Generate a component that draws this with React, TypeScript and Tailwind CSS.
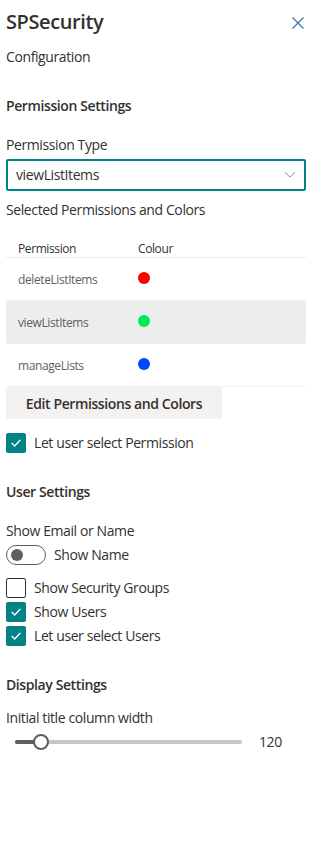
import React from "react";

const Check = () => (
  <svg width="12" height="12" viewBox="0 0 12 12" fill="none">
    <path d="M2 6.3 L4.7 9 L10 3.2" stroke="white" strokeWidth="1.3" strokeLinecap="round" strokeLinejoin="round" />
  </svg>
);

function Checkbox({ checked, label }: { checked: boolean; label: string }) {
  return (
    <div className="flex items-center h-[20px]">
      {checked ? (
        <div className="w-[20px] h-[20px] rounded-[2px] bg-[#038387] flex items-center justify-center">
          <Check />
        </div>
      ) : (
        <div className="w-[20px] h-[20px] rounded-[2px] border border-[#323130] bg-white" />
      )}
      <span className="ml-[8px] text-[14px] leading-[20px] text-[#323130]">{label}</span>
    </div>
  );
}

const rows = [
  { name: "deleteListItems", color: "#ff0000", bg: "bg-white" },
  { name: "viewListItems", color: "#00e85c", bg: "bg-[#ededed]" },
  { name: "manageLists", color: "#0048ff", bg: "bg-white" },
];

export default function App() {
  return (
    <div
      className="w-[318px] h-[841px] bg-white pl-[6px] pr-[12px] text-[#323130] tracking-[-0.4px]"
      style={{ fontFamily: '"Segoe UI", "Open Sans", sans-serif' }}
    >
      <div className="flex items-start justify-between pt-[8px]">
        <h1 className="text-[20px] leading-[28px] font-semibold text-[#323130]">SPSecurity</h1>
        <svg width="12" height="12" viewBox="0 0 12 12" className="mt-[9px] mr-[2px]">
          <path d="M0.5 0.5 L11.5 11.5 M11.5 0.5 L0.5 11.5" stroke="#3b6ea8" strokeWidth="1.1" />
        </svg>
      </div>
      <div className="mt-[11px] text-[14px] leading-[20px]">Configuration</div>

      <div className="mt-[29px] text-[14px] leading-[20px] font-semibold">Permission Settings</div>

      <div className="mt-[19px] text-[14px] leading-[20px]">Permission Type</div>
      <div className="mt-[4px] h-[32px] border-2 border-[#038387] rounded-[2px] flex items-center justify-between pl-[8px] pr-[8px]">
        <span className="text-[14px] leading-[20px]">viewListItems</span>
        <svg width="12" height="8" viewBox="0 0 12 8">
          <path d="M1 1.2 L6 6.2 L11 1.2" stroke="#8a8886" strokeWidth="1" fill="none" />
        </svg>
      </div>
      <div className="mt-[9px] text-[14px] leading-[20px]">Selected Permissions and Colors</div>

      <div className="mt-[20px]">
        <div className="flex h-[18px] items-end border-b border-[#edebe9] text-[12px] leading-[16px] text-[#323130]">
          <div className="w-[132px] pl-[12px]">Permission</div>
          <div>Colour</div>
        </div>
        {rows.map((r) => (
          <div key={r.name} className={`flex items-center h-[43px] border-b border-[#f3f2f1] ${r.bg}`}>
            <div className="w-[132px] pl-[12px] text-[12px] leading-[16px] text-[#605e5c] mt-[2px]">{r.name}</div>
            <div className="w-[12px] h-[12px] rounded-full mb-[2px]" style={{ backgroundColor: r.color }} />
          </div>
        ))}
      </div>
      <button className="h-[32px] w-[216px] bg-[#f3f2f1] text-[14px] font-semibold text-[#323130] rounded-[2px]">
        Edit Permissions and Colors
      </button>
      <div className="mt-[14px]">
        <Checkbox checked label="Let user select Permission" />
      </div>

      <div className="mt-[29px] text-[14px] leading-[20px] font-semibold">User Settings</div>

      <div className="mt-[19px] text-[14px] leading-[20px]">Show Email or Name</div>
      <div className="mt-[4px] flex items-center h-[20px]">
        <div className="w-[40px] h-[20px] rounded-full border border-[#605e5c] flex items-center pl-[4px]">
          <div className="w-[12px] h-[12px] rounded-full bg-[#605e5c]" />
        </div>
        <span className="ml-[8px] text-[14px] leading-[20px]">Show Name</span>
      </div>
      <div className="mt-[13px] flex flex-col gap-[4px]">
        <Checkbox checked={false} label="Show Security Groups" />
        <Checkbox checked label="Show Users" />
        <Checkbox checked label="Let user select Users" />
      </div>

      <div className="mt-[29px] text-[14px] leading-[20px] font-semibold">Display Settings</div>
      <div className="mt-[13px] text-[14px] leading-[20px]">Initial title column width</div>
      <div className="flex items-center h-[28px]">
        <div className="relative ml-[9px] w-[227px] h-[4px] rounded-full bg-[#c8c6c4]">
          <div className="absolute left-0 top-0 h-[4px] w-[26px] rounded-full bg-[#605e5c]" />
          <div className="absolute left-[18px] top-[-6px] w-[16px] h-[16px] rounded-full bg-white border-2 border-[#605e5c]" />
        </div>
        <span className="ml-[17px] text-[14px] leading-[20px]">120</span>
      </div>
    </div>
  );
}
